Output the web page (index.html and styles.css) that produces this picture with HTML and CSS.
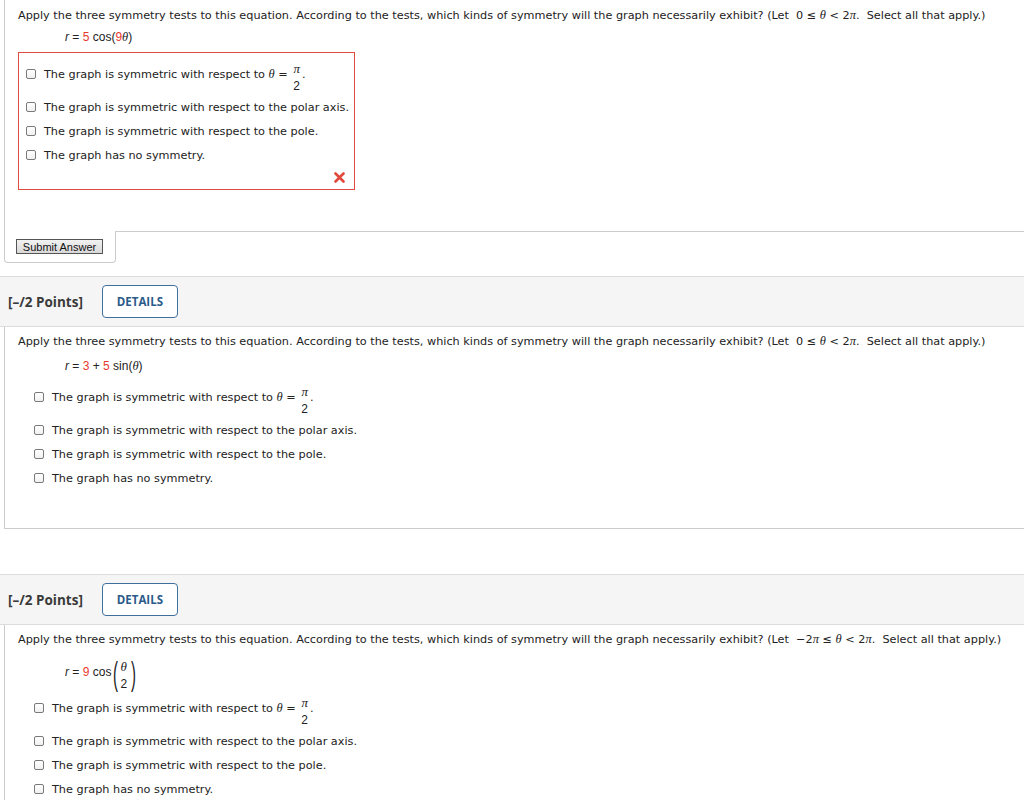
FILE: index.html
```html
<!DOCTYPE html>
<html lang="en">
<head>
    <meta charset="UTF-8">
    <title>Symmetry Tests</title>
    <link rel="stylesheet" href="styles.css">
</head>
<body>
    <div class="question first">
        <p class="prompt">Apply the three symmetry tests to this equation. According to the tests, which kinds of symmetry will the graph necessarily exhibit? (Let&nbsp; 0 ≤ <i class="m">θ</i> &lt; 2<i class="m">π</i>.&nbsp; Select all that apply.)</p>
        <div class="formula"><i class="var">r</i> = <span class="num">5</span> cos(<span class="num">9</span><i class="m">θ</i>)</div>
        <div class="answer wrong">
            <ul class="options">
                <li><span class="box"></span>The graph is symmetric with respect to <i class="m">θ</i> = <span class="frac"><span class="top"><i class="m">π</i></span><span class="bot">2</span></span>.</li>
                <li><span class="box"></span>The graph is symmetric with respect to the polar axis.</li>
                <li><span class="box"></span>The graph is symmetric with respect to the pole.</li>
                <li><span class="box"></span>The graph has no symmetry.</li>
            </ul>
            <div class="mark">
                <svg width="11" height="11" viewBox="0 0 11 11"><path d="M1.5 1.5 L9.5 9.5 M9.5 1.5 L1.5 9.5" stroke="#e2493d" stroke-width="2.6" stroke-linecap="round"/></svg>
            </div>
        </div>
    </div>
    <div class="submit-row">
        <div class="submit-tab"><button class="submit">Submit Answer</button></div>
        <div class="submit-rest"></div>
    </div>

    <div class="points-bar">
        <span class="points">[–/2 Points]</span>
        <button class="details">DETAILS</button>
    </div>
    <div class="question">
        <p class="prompt">Apply the three symmetry tests to this equation. According to the tests, which kinds of symmetry will the graph necessarily exhibit? (Let&nbsp; 0 ≤ <i class="m">θ</i> &lt; 2<i class="m">π</i>.&nbsp; Select all that apply.)</p>
        <div class="formula"><i class="var">r</i> = <span class="num">3</span> + <span class="num">5</span> sin(<i class="m">θ</i>)</div>
        <ul class="options indented">
            <li><span class="box"></span>The graph is symmetric with respect to <i class="m">θ</i> = <span class="frac"><span class="top"><i class="m">π</i></span><span class="bot">2</span></span>.</li>
            <li><span class="box"></span>The graph is symmetric with respect to the polar axis.</li>
            <li><span class="box"></span>The graph is symmetric with respect to the pole.</li>
            <li><span class="box"></span>The graph has no symmetry.</li>
        </ul>
    </div>

    <div class="points-bar second">
        <span class="points">[–/2 Points]</span>
        <button class="details">DETAILS</button>
    </div>
    <div class="question">
        <p class="prompt">Apply the three symmetry tests to this equation. According to the tests, which kinds of symmetry will the graph necessarily exhibit? (Let&nbsp; −2<i class="m">π</i> ≤ <i class="m">θ</i> &lt; 2<i class="m">π</i>.&nbsp; Select all that apply.)</p>
        <div class="formula tall"><i class="var">r</i> = <span class="num">9</span> cos<span class="paren">(</span><span class="frac"><span class="top"><i class="m">θ</i></span><span class="bot">2</span></span><span class="paren">)</span></div>
        <ul class="options indented">
            <li><span class="box"></span>The graph is symmetric with respect to <i class="m">θ</i> = <span class="frac"><span class="top"><i class="m">π</i></span><span class="bot">2</span></span>.</li>
            <li><span class="box"></span>The graph is symmetric with respect to the polar axis.</li>
            <li><span class="box"></span>The graph is symmetric with respect to the pole.</li>
            <li><span class="box"></span>The graph has no symmetry.</li>
        </ul>
    </div>
</body>
</html>
```

FILE: styles.css
```css
* {
    box-sizing: border-box;
}
body {
    margin: 0;
    font-family: "DejaVu Sans", Verdana, sans-serif;
    font-size: 11.25px;
    line-height: 16px;
    color: #222;
    background: #fff;
    overflow: hidden;
}
.question {
    margin-left: 4px;
    padding: 6px 0 33px 13px;
    border-left: 1px solid #ccc;
    border-bottom: 1px solid #ccc;
}
.question.first {
    padding-top: 7px;
    padding-bottom: 41px;
    border-bottom: none;
}
.prompt {
    margin: 0;
    white-space: nowrap;
}
.m {
    font-family: "Liberation Serif", "Times New Roman", serif;
    font-style: italic;
    font-size: 12.5px;
}
.formula {
    font-family: "Liberation Sans", Arial, sans-serif;
    font-size: 12px;
    margin: 8px 0 0 47px;
}
.first .formula {
    margin-top: 5px;
}
.var {
    font-style: italic;
}
.num {
    color: #e8392d;
}
.formula.tall {
    margin-top: 7px;
    line-height: 34px;
}
.paren {
    display: inline-block;
    font-family: "Liberation Sans", Arial, sans-serif;
    font-size: 33px;
    line-height: 34px;
    vertical-align: -9px;
    transform: scaleX(0.45);
    width: 7px;
    text-align: center;
}
.frac {
    display: inline-block;
    vertical-align: -12px;
    margin: -4px 1px 0;
    text-align: center;
    font-family: "Liberation Sans", Arial, sans-serif;
    font-size: 12px;
    line-height: 12px;
}
.frac .top,
.frac .bot {
    display: block;
    padding: 0 1px;
}
.frac .top {
    padding-bottom: 5px;
}
.frac .top .m {
    font-size: 13px;
}
.answer.wrong {
    width: 337px;
    margin-top: 7px;
    border: 1px solid #e04a3f;
    padding: 13px 7px 6px;
}
.options {
    list-style: none;
    margin: 0;
    padding: 0;
}
.options li {
    margin-bottom: 8px;
    white-space: nowrap;
}
.options.indented {
    margin: 15px 0 0 16px;
}
.tall + .options.indented {
    margin-top: 9px;
}
.box {
    display: inline-block;
    width: 10px;
    height: 10px;
    border: 1px solid #7a7a7a;
    border-radius: 2px;
    background: linear-gradient(#fff, #f0f0f0);
    vertical-align: -1px;
    margin-right: 8px;
}
.mark {
    display: flex;
    justify-content: flex-end;
    padding-right: 2px;
    margin-top: 5px;
}
.mark svg {
    display: block;
}
.submit-row {
    display: flex;
}
.submit-tab {
    width: 112px;
    margin-left: 4px;
    padding: 8px 0 8px 11px;
    border: 1px solid #ccc;
    border-top: none;
    border-radius: 0 0 4px 4px;
}
.submit-rest {
    flex: 1;
    border-top: 1px solid #ccc;
}
.submit {
    display: block;
    font-family: "Liberation Sans", Arial, sans-serif;
    font-size: 11px;
    line-height: 12px;
    color: #111;
    padding: 0 5px;
    height: 15px;
    width: 87px;
    background: linear-gradient(#f2f2f2, #d8d8d8);
    border: 1px solid #555;
    border-radius: 0;
}
.points-bar {
    display: flex;
    align-items: center;
    gap: 19px;
    margin-top: 13px;
    height: 51px;
    padding: 0 0 0 8px;
    background: #f5f5f5;
    border-top: 1px solid #ddd;
    border-bottom: 1px solid #ddd;
}
.points-bar.second {
    margin-top: 45px;
}
.points {
    font-family: "Open Sans", sans-serif;
    font-weight: 700;
    font-size: 13.5px;
    color: #3a3a3a;
}
.details {
    font-family: "Open Sans", sans-serif;
    font-weight: 700;
    font-size: 11.5px;
    color: #2b5b8a;
    background: #fff;
    border: 1px solid #3f6f9c;
    border-radius: 4px;
    width: 76px;
    height: 33px;
    padding: 0;
}
```
